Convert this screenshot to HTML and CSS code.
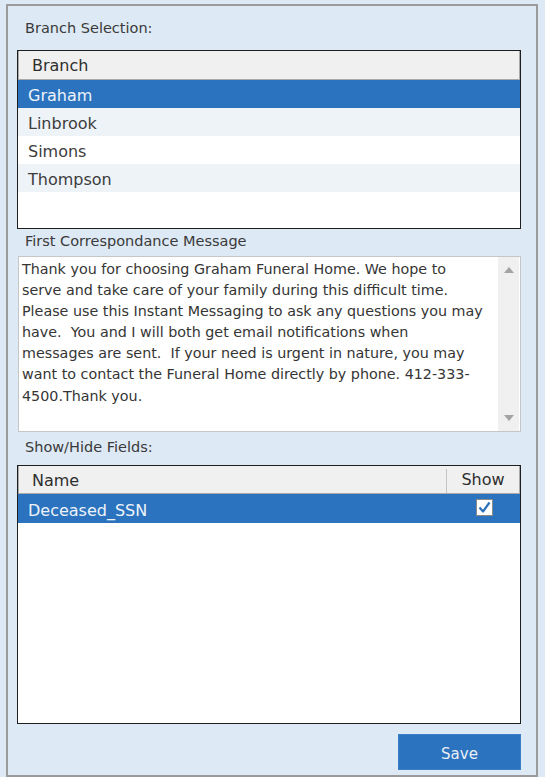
FILE: index.html
```html
<!DOCTYPE html>
<html lang="en">
<head>
<meta charset="utf-8">
<title>Branch Settings</title>
<link rel="stylesheet" href="styles.css">
</head>
<body>
<div class="panel">
  <div class="label label-top">Branch Selection:</div>
  <div class="grid branch-grid">
    <div class="grid-head"><div class="head-cell">Branch</div></div>
    <div class="row selected">Graham</div>
    <div class="row alt">Linbrook</div>
    <div class="row">Simons</div>
    <div class="row alt">Thompson</div>
  </div>
  <div class="label label-mid">First Correspondance Message</div>
  <div class="memo">
    <div class="memo-text">Thank you for choosing Graham Funeral Home. We hope to<br>serve and take care of your family during this difficult time.<br>Please use this Instant Messaging to ask any questions you may<br>have.&nbsp; You and I will both get email notifications when<br>messages are sent.&nbsp; If your need is urgent in nature, you may<br>want to contact the Funeral Home directly by phone. 412-333-<br>4500.Thank you.</div>
    <div class="scrollbar"><span class="arrow up"></span><span class="arrow down"></span></div>
  </div>
  <div class="label label-fields">Show/Hide Fields:</div>
  <div class="grid fields-grid">
    <div class="grid-head">
      <div class="head-cell name-cell">Name</div>
      <div class="head-cell show-cell">Show</div>
    </div>
    <div class="row selected fields-row">
      <span class="name-val">Deceased_SSN</span>
      <span class="show-val">
        <svg class="check" width="17" height="17" viewBox="0 0 17 17">
          <rect x="0.5" y="0.5" width="16" height="16" fill="#ffffff" stroke="#8a8a8a"/>
          <path d="M3.5 8.5 L7 12.5 L13.5 3.5" fill="none" stroke="#2a6fba" stroke-width="2.2" stroke-linejoin="round"/>
        </svg>
      </span>
    </div>
  </div>
  <div class="actions"><button class="save">Save</button></div>
</div>
</body>
</html>
```
FILE: styles.css
```css
html, body {
  margin: 0;
  background: #dde9f4;
}
body {
  padding: 4px 0 0 6px;
  font-family: "DejaVu Sans", "Liberation Sans", sans-serif;
  color: #3a3a3a;
}
.panel {
  box-sizing: border-box;
  width: 532px;
  height: 773px;
  border: 2px solid #9b9b9b;
  padding: 0 15px 0 9px;
  display: flex;
  flex-direction: column;
}
.label {
  font-size: 14.5px;
  line-height: 17px;
  padding-left: 8px;
  color: #3a3a3a;
}
.label-top {
  height: 44px;
  display: flex;
  align-items: center;
}
.label-mid {
  height: 27px;
  box-sizing: border-box;
  padding-top: 4px;
}
.label-fields {
  height: 33px;
  box-sizing: border-box;
  padding-top: 7px;
}
.grid {
  box-sizing: border-box;
  border: 1px solid #1e1e1e;
  background: #ffffff;
  display: flex;
  flex-direction: column;
}
.branch-grid {
  height: 179px;
}
.fields-grid {
  height: 259px;
}
.grid-head {
  display: flex;
  background: #f0f0f0;
  border: 1px solid #a9a9a9;
  border-top: 0;
  height: 29px;
  box-sizing: border-box;
}
.fields-grid .grid-head {
  height: 28px;
}
.head-cell {
  font-size: 16px;
  line-height: 24px;
  padding: 3px 0 0 13px;
  color: #2e2e2e;
}
.name-cell {
  flex: 1;
  border-right: 1px solid #c4c4c4;
  margin-top: 3px;
  padding-top: 0;
  line-height: 24px;
}
.show-cell {
  width: 72px;
  padding-left: 0;
  padding-top: 2px;
  text-align: center;
}
.row {
  box-sizing: border-box;
  height: 28px;
  padding: 4px 0 0 10px;
  line-height: 24px;
  font-size: 16px;
  color: #3c3c3c;
}
.row.alt {
  background: #eef3f8;
}
.row.selected {
  background: #2b73be;
  color: #eef3fa;
}
.fields-row {
  height: 29px;
  padding-top: 4px;
  line-height: 25px;
  display: flex;
}
.name-val {
  flex: 1;
}
.show-val {
  width: 72px;
  display: flex;
  align-items: flex-start;
  justify-content: center;
  padding-top: 1px;
}
.check {
  display: block;
}
.memo {
  box-sizing: border-box;
  height: 176px;
  margin-left: 1px;
  border: 1px solid #c6c6c6;
  background: #ffffff;
  display: flex;
}
.memo-text {
  flex: 1;
  font-size: 14.3px;
  line-height: 21.1px;
  padding: 2px 0 0 3px;
  color: #353535;
  white-space: nowrap;
  overflow: hidden;
}
.scrollbar {
  width: 21px;
  margin: 0 1px 0 0;
  background: #f0f0f0;
  display: flex;
  flex-direction: column;
  justify-content: space-between;
  align-items: center;
  padding: 10px 0;
  box-sizing: border-box;
}
.arrow {
  width: 0;
  height: 0;
  border-left: 5px solid transparent;
  border-right: 5px solid transparent;
}
.arrow.up {
  border-bottom: 6px solid #a3a3a3;
}
.arrow.down {
  border-top: 6px solid #a3a3a3;
}
.actions {
  display: flex;
  justify-content: flex-end;
  margin-top: 10px;
}
.save {
  width: 123px;
  height: 36px;
  background: #2b73be;
  border: 1px solid #3a7fc6;
  color: #e9eff7;
  font-family: "DejaVu Sans", "Liberation Sans", sans-serif;
  font-size: 15px;
  padding: 4px 0 0 0;
}
```
